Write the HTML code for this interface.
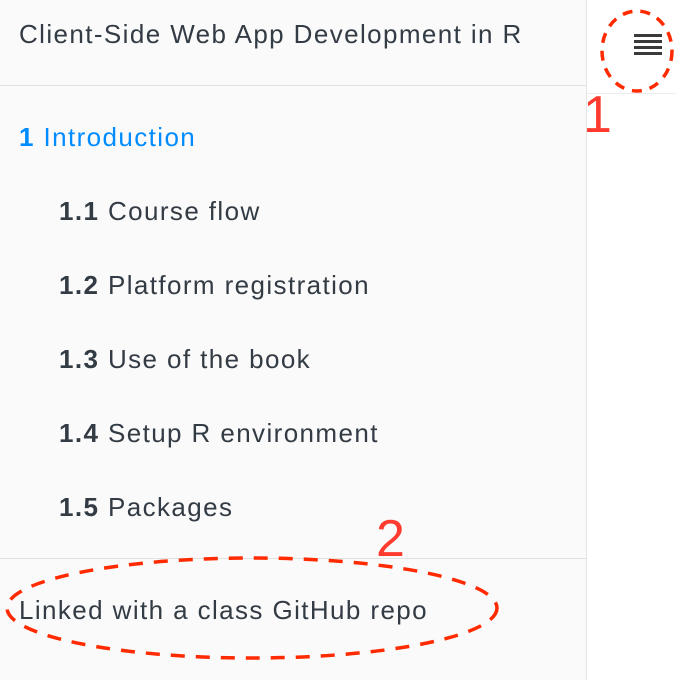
<!DOCTYPE html>
<html><head><style>
body{margin:0;width:676px;height:680px;overflow:hidden;background:#fff;font-family:"Liberation Sans",sans-serif;position:relative}
.side{position:absolute;left:0;top:0;width:586px;height:680px;background:#fafafa;border-right:1px solid #e4e4e4}
.t{position:absolute;white-space:nowrap;color:#333b44;font-size:26px;letter-spacing:1.4px}
.hl{position:absolute;height:1px;background:#e2e2e2}
b{font-weight:bold}
</style></head><body>
<div class="side"></div>
<div class="hl" style="left:0;top:85px;width:586px"></div>
<div class="hl" style="left:0;top:558px;width:586px"></div>
<div class="hl" style="left:587px;top:93px;width:89px;background:#ececec"></div>
<div class="t" style="left:19px;top:19px">Client-Side Web App Development in R</div>
<div class="t" style="left:19px;top:122px;color:#008cff"><b>1</b> Introduction</div>
<div class="t" style="left:59px;top:196px"><b>1.1</b> Course flow</div>
<div class="t" style="left:59px;top:270px"><b>1.2</b> Platform registration</div>
<div class="t" style="left:59px;top:344px"><b>1.3</b> Use of the book</div>
<div class="t" style="left:59px;top:418px"><b>1.4</b> Setup R environment</div>
<div class="t" style="left:59px;top:492px"><b>1.5</b> Packages</div>
<div class="t" style="left:19px;top:595px">Linked with a class GitHub repo</div>
<svg width="676" height="680" style="position:absolute;left:0;top:0">
<g fill="#3a3a3a"><rect x="634" y="34" width="28" height="3"/><rect x="634" y="40" width="28" height="3"/><rect x="634" y="46" width="28" height="3"/><rect x="634" y="52" width="28" height="3"/></g>
<ellipse cx="637" cy="51" rx="35" ry="40" fill="none" stroke="#ff2a00" stroke-width="3.5" stroke-dasharray="10 8"/>
<ellipse cx="252" cy="608" rx="245" ry="50" fill="none" stroke="#ff2a00" stroke-width="3.5" stroke-dasharray="14 11"/>
<text x="583" y="132" font-size="52" fill="#ff3b30" font-family="Liberation Sans">1</text>
<text x="376" y="556" font-size="52" fill="#ff3b30" font-family="Liberation Sans">2</text>
</svg>
</body></html>
